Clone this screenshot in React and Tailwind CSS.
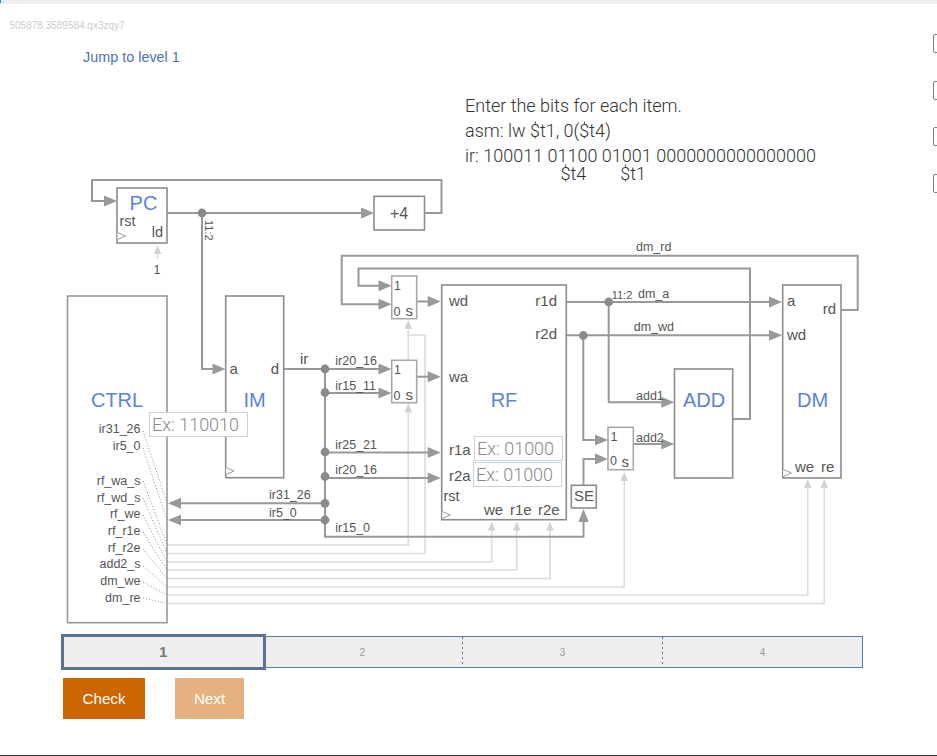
import React from "react";

const W = "#999999";
const L = "#dcdcdc";
const LA = "#d2d2d2";
const B = "#8c8c8c";
const M = "#a8a8a8";
const TX = "#555555";
const BL = "#5b84d8";

const Wire = ({ d, c = W, w = 2 }) => <path d={d} fill="none" stroke={c} strokeWidth={w} strokeLinejoin="miter" />;
const ArrR = ({ x, y, c = W }) => <polygon points={`${x},${y} ${x - 13},${y - 5.5} ${x - 13},${y + 5.5}`} fill={c} />;
const ArrL = ({ x, y, c = W }) => <polygon points={`${x},${y} ${x + 13},${y - 5.5} ${x + 13},${y + 5.5}`} fill={c} />;
const ArrU = ({ x, y, c = LA, l = 9, h = 3.8 }) => <polygon points={`${x},${y} ${x - h},${y + l} ${x + h},${y + l}`} fill={c} />;
const Node = ({ x, y }) => <circle cx={x} cy={y} r={4.4} fill="#8a8a8a" />;
const Box = ({ x, y, x2, y2, c = B, w = 1.6 }) => <rect x={x} y={y} width={x2 - x} height={y2 - y} fill="#ffffff" stroke={c} strokeWidth={w} />;
const T = ({ x, y, s = 12.5, a = "start", c = TX, children }) => (
  <text x={x} y={y} fontSize={s} textAnchor={a} fill={c}>{children}</text>
);
const H = ({ x, y, children }) => <T x={x} y={y} s={20} a="middle" c={BL}>{children}</T>;
const Clock = ({ x, y }) => <path d={`M${x} ${y}L${x + 8} ${y + 3.5}L${x} ${y + 7}`} fill="#ffffff" stroke="#9a9a9a" strokeWidth={1} />;

const dots = [
  [143, 431, 167, 503], [143, 448, 167, 520], [143, 481, 167, 545], [143, 498, 167, 553.5],
  [143, 515, 167, 562], [143, 532, 167, 570], [143, 549, 167, 578.5], [143, 566, 167, 587],
  [143, 582, 167, 595], [143, 598, 167, 603.5],
];
const ctrlLabels = [
  ["ir31_26", 432.5], ["ir5_0", 449.5], ["rf_wa_s", 484.5], ["rf_wd_s", 501.5], ["rf_we", 517.5],
  ["rf_r1e", 534.5], ["rf_r2e", 551.5], ["add2_s", 567.5], ["dm_we", 584.5], ["dm_re", 601.5],
];

function Diagram() {
  return (
    <svg viewBox="0 178 933 450" width="933" height="450" className="block font-['Liberation_Sans',Arial,sans-serif]">
      {/* control wires */}
      <Wire c={L} w={1.6} d="M167 545H408.3V332" />
      <Wire c={L} w={1.6} d="M167 553.5H425V335H408.3V330" />
      <Wire c={L} w={1.6} d="M167 562H491.7V530" />
      <Wire c={L} w={1.6} d="M167 570H516.7V530" />
      <Wire c={L} w={1.6} d="M167 578.5H550V530" />
      <Wire c={L} w={1.6} d="M167 587H624.3V480" />
      <Wire c={L} w={1.6} d="M167 595H807.7V487" />
      <Wire c={L} w={1.6} d="M167 603.5H824.3V487" />
      <Wire c={L} w={1.6} d="M157.5 259V252" />
      <ArrU x={408.3} y={320} />
      <ArrU x={408.3} y={403.5} />
      <ArrU x={491.7} y={521.5} />
      <ArrU x={516.7} y={521.5} />
      <ArrU x={550} y={521.5} />
      <ArrU x={624.3} y={472} />
      <ArrU x={807.7} y={479} />
      <ArrU x={824.3} y={479} />
      <ArrU x={157.5} y={245} />

      {/* data wires */}
      <Wire d="M424 213H441.5V180H92V201H106" />
      <ArrR x={117} y={201} />
      <Wire d="M167 213H364" />
      <ArrR x={374} y={213} />
      <Wire d="M202 213V369H215" />
      <ArrR x={225.5} y={369} />
      <Wire d="M733 419H750V268.5H358.5V285.7H382" />
      <ArrR x={391.5} y={285.7} />
      <Wire d="M841 310H857.7V255.7H341.7V304.3H382" />
      <ArrR x={391.5} y={304.3} />
      <Wire d="M417 301.5H430" />
      <ArrR x={440.7} y={301.5} />
      <Wire d="M417 376.7H430" />
      <ArrR x={440.7} y={376.7} />
      <Wire d="M284 369H382" />
      <ArrR x={391.5} y={369} />
      <Wire d="M325 369V536.7H583.5V518" />
      <ArrU x={583.5} y={509} c={W} l={13} h={5.2} />
      <Wire d="M325 393H382" />
      <ArrR x={391.5} y={393} />
      <Wire d="M325 452.5H430" />
      <ArrR x={440.7} y={452.5} />
      <Wire d="M325 478H430" />
      <ArrR x={440.7} y={478} />
      <Wire d="M325 503.3H178" />
      <ArrL x={168} y={503.3} />
      <Wire d="M325 520H178" />
      <ArrL x={168} y={520} />
      <Wire d="M566 302H772" />
      <ArrR x={782} y={302} />
      <Wire d="M566 335.3H772" />
      <ArrR x={782} y={335.3} />
      <Wire d="M608.7 302V402.3H664" />
      <ArrR x={674.3} y={402.3} />
      <Wire d="M583.3 335.3V440H598" />
      <ArrR x={608} y={440} />
      <Wire d="M583.5 486V459H598" />
      <ArrR x={608} y={459} />
      <Wire d="M633 444H664" />
      <ArrR x={674.3} y={444} />

      {/* nodes */}
      <Node x={202} y={213} />
      <Node x={325} y={369} />
      <Node x={325} y={392.5} />
      <Node x={325} y={452} />
      <Node x={325} y={476.5} />
      <Node x={325} y={503.3} />
      <Node x={325} y={520} />
      <Node x={608.7} y={302} />
      <Node x={583.3} y={335.5} />

      {/* blocks */}
      <Box x={117} y={188} x2={167} y2={243} />
      <Box x={374} y={196.3} x2={424.5} y2={230} />
      <Box x={67.5} y={296} x2={167} y2={622.7} c={W} />
      <Box x={225.7} y={296} x2={283.7} y2={477.7} />
      <Box x={441.7} y={285} x2={566.3} y2={519.7} />
      <Box x={674.5} y={369} x2={732.7} y2={478} />
      <Box x={782.7} y={285} x2={841} y2={478} />
      <Box x={391.7} y={276} x2={416.7} y2={318.7} c={M} />
      <Box x={391.7} y={360.3} x2={416.7} y2={402.7} c={M} />
      <Box x={608} y={427.3} x2={633.3} y2={469.7} c={M} />
      <Box x={571.3} y={485.3} x2={596.3} y2={508} />
      <Clock x={117.5} y={232.5} />
      <Clock x={226} y={467.5} />
      <Clock x={442.3} y={511.5} />
      <Clock x={783.3} y={469.5} />

      {/* dotted links */}
      {dots.map(([a, b, c, d], i) => (
        <line key={i} x1={a} y1={b} x2={c} y2={d} stroke="#8a8a8a" strokeWidth={1} strokeDasharray="1 2" />
      ))}

      {/* labels */}
      {ctrlLabels.map(([t, y]) => <T key={t} x={140.5} y={y} a="end">{t}</T>)}
      <H x={143.5} y={209.5}>PC</H>
      <H x={117} y={406.7}>CTRL</H>
      <H x={254.5} y={406.7}>IM</H>
      <H x={504} y={406.7}>RF</H>
      <H x={704} y={406.7}>ADD</H>
      <H x={812.5} y={406.7}>DM</H>

      <T x={119.5} y={226} s={14.5}>rst</T>
      <T x={163} y={237} s={14.5} a="end">ld</T>
      <T x={157} y={273.5} a="middle">1</T>
      <T x={399} y={218.5} s={16} a="middle">+4</T>
      <text x={0} y={0} fontSize={11} fill={TX} transform="translate(205 220) rotate(90)">11:2</text>

      <T x={229.5} y={374} s={15}>a</T>
      <T x={279} y={374} s={15} a="end">d</T>
      <T x={300} y={363.5} s={15}>ir</T>

      <T x={335.3} y={364.5}>ir20_16</T>
      <T x={335.3} y={389.5}>ir15_11</T>
      <T x={335.3} y={448.5}>ir25_21</T>
      <T x={335.3} y={474}>ir20_16</T>
      <T x={335.3} y={532}>ir15_0</T>
      <T x={269} y={498.5}>ir31_26</T>
      <T x={269} y={516.5}>ir5_0</T>

      <T x={394} y={290}>1</T>
      <T x={393.5} y={315.5}>0</T>
      <T x={405.5} y={315.5} s={15}>s</T>
      <T x={394} y={374}>1</T>
      <T x={393.5} y={399.5}>0</T>
      <T x={405.5} y={399.5} s={15}>s</T>
      <T x={610.5} y={441}>1</T>
      <T x={610} y={465}>0</T>
      <T x={621.5} y={467} s={15}>s</T>

      <T x={449} y={305.5} s={15}>wd</T>
      <T x={449} y={381.5} s={15}>wa</T>
      <T x={557} y={306} s={15} a="end">r1d</T>
      <T x={557} y={339} s={15} a="end">r2d</T>
      <T x={449} y={455} s={15}>r1a</T>
      <T x={449} y={481} s={15}>r2a</T>
      <T x={443.5} y={501} s={14.5}>rst</T>
      <T x={484} y={514.5} s={15}>we</T>
      <T x={510} y={514.5} s={15}>r1e</T>
      <T x={538} y={514.5} s={15}>r2e</T>
      <T x={584} y={501} s={15} a="middle">SE</T>

      <T x={636} y={251}>dm_rd</T>
      <T x={611.7} y={298.5} s={11}>11:2</T>
      <T x={638} y={298}>dm_a</T>
      <T x={633.7} y={331}>dm_wd</T>
      <T x={636} y={399.5}>add1</T>
      <T x={636} y={441.5}>add2</T>
      <T x={787} y={306} s={15}>a</T>
      <T x={787} y={340} s={15}>wd</T>
      <T x={836} y={314} s={15} a="end">rd</T>
      <T x={795} y={472} s={15}>we</T>
      <T x={821} y={472} s={15}>re</T>
    </svg>
  );
}

const inputCls =
  "absolute h-[25px] border border-[#c6d3d9] bg-white px-[2px] font-['Roboto',sans-serif] font-light text-[18px] leading-[23px] text-[#333] placeholder:text-[#8a8a8a] outline-none";

const sepCls =
  "w-px shrink-0 bg-[repeating-linear-gradient(to_bottom,#4f7ba8_0,#4f7ba8_2px,transparent_2px,transparent_5px)]";

export default function App() {
  return (
    <div className="w-[937px] h-[756px] overflow-hidden bg-white flex flex-col">
      <div className="h-[4px] shrink-0 bg-[#eeeeee]">
        <div className="w-px h-[3px] bg-[#2f8fd8]" />
      </div>
      <div className="flex flex-1 min-h-0">
        <div className="w-[933px] shrink-0">
          <div className="mt-[15px] ml-[9.5px] h-[14px] leading-[14px] text-[10px] text-[#cccccc] font-['Liberation_Sans',Arial,sans-serif]">
            505878.3589584.qx3zqy7
          </div>
          <div className="mt-[14px] ml-[83px] leading-[20px] text-[14.4px] text-[#4f74a8] font-['Liberation_Sans',Arial,sans-serif]">
            Jump to level 1
          </div>
          <div className="mt-[26px] ml-[465px] font-['Roboto',sans-serif] font-light text-[18px] text-[#333333]">
            <div className="leading-[25px]">Enter the bits for each item.</div>
            <div className="leading-[25px]">asm: lw $t1, 0($t4)</div>
            <div className="leading-[25px]">ir: 100011 01100 01001 0000000000000000</div>
            <div className="-mt-[3px] leading-[18px] pl-[95.5px] flex gap-[34px]">
              <span>$t4</span>
              <span>$t1</span>
            </div>
          </div>
          <div className="relative -mt-[5px] h-[450px]">
            <Diagram />
            <input readOnly placeholder="Ex: 110010" className={`${inputCls} left-[149px] top-[234px] w-[99px]`} />
            <input readOnly placeholder="Ex: 01000" className={`${inputCls} left-[474px] top-[258px] w-[89px]`} />
            <input readOnly placeholder="Ex: 01000" className={`${inputCls} left-[473px] top-[284px] w-[89px]`} />
          </div>
          <div className="mt-[8px] ml-[62px] w-[801px] h-[32px] flex border border-[#5581a8] bg-[#eeeeee] font-['Liberation_Sans',Arial,sans-serif]">
            <div className="relative -ml-[2px] -my-[3px] w-[204.5px] shrink-0 border-[3px] border-[#5a7194] bg-[#eeeeee] flex items-center justify-center text-[15px] font-bold text-[#777777]">
              1
            </div>
            <div className="w-[196.5px] shrink-0 pr-[3px] flex items-center justify-center text-[10px] text-[#999999]">2</div>
            <div className={sepCls} />
            <div className="w-[199px] shrink-0 flex items-center justify-center text-[10px] text-[#999999]">3</div>
            <div className={sepCls} />
            <div className="flex-1 flex items-center justify-center text-[10px] text-[#999999]">4</div>
          </div>
          <div className="mt-[10px] ml-[63px] flex gap-[30px] font-['Liberation_Sans',Arial,sans-serif] text-[15.2px] text-white">
            <button className="w-[82px] h-[41px] pt-[2px] bg-[#cc6600]">Check</button>
            <button className="w-[69px] h-[41px] pt-[2px] bg-[#e5b17f]">Next</button>
          </div>
        </div>
        <div className="w-[20px] shrink-0 pt-[30px] flex flex-col gap-[27.5px]">
          <div className="w-[20px] h-[19px] border border-[#808080] rounded-[2px]" />
          <div className="w-[20px] h-[19px] border border-[#808080] rounded-[2px]" />
          <div className="w-[20px] h-[19px] border border-[#808080] rounded-[2px]" />
          <div className="w-[20px] h-[19px] border border-[#808080] rounded-[2px]" />
        </div>
      </div>
      <div className="h-px shrink-0 bg-[#333333]" />
    </div>
  );
}
